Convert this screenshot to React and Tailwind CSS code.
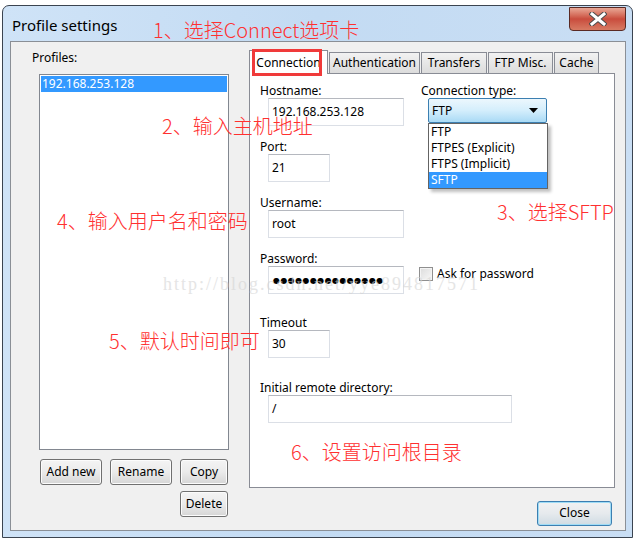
import React from "react"

function WinButton({ children, className = "" }) {
  return (
    <button
      className={`flex items-center justify-center h-[26px] rounded-[3px] border border-[#707070] bg-gradient-to-b from-[#f4f4f4] via-[#ebebeb] to-[#d6d6d6] text-[12px] text-black shadow-[inset_0_0_0_1px_#fcfcfc] ${className}`}
    >
      {children}
    </button>
  )
}

function Field({ label, value, width, className = "" }) {
  return (
    <div className={className}>
      <div className="h-[15px] leading-[15px] text-[12px]">{label}</div>
      <div
        className="ml-[8px] h-[28px] border border-[#dbdfe6] border-t-[#b5b8bf] bg-white pl-[3px] flex items-center text-[12px]"
        style={{ width }}
      >
        {value}
      </div>
    </div>
  )
}

export default function App() {
  const tabs = [
    ["Authentication", "w-[91px]"],
    ["Transfers", "w-[66px]"],
    ["FTP Misc.", "w-[65px]"],
    ["Cache", "w-[45px]"],
  ]

  return (
    <div className="relative w-[640px] h-[544px] bg-white pl-[2px] pt-[5px] overflow-hidden font-['Noto_Sans','Noto_Sans_CJK_SC',sans-serif] text-black">
      {/* window frame */}
      <div className="w-[631px] h-[533px] rounded-t-[7px] border border-[#3b4450] bg-gradient-to-r from-[#cfe3f7] via-[#c3dbf3] to-[#c9def4] flex flex-col">
        <div className="h-[35px] flex items-start justify-between pl-[9px] pr-[6px]">
          <div className="pt-[9px] text-[15px] leading-[20px]">Profile settings</div>
          <div className="mt-[1px] w-[57px] h-[24px] rounded-b-[4px] border border-[#5a2a24] bg-gradient-to-b from-[#e8a796] via-[#c94c3d] to-[#d77a63] flex items-center justify-center">
            <svg width="18" height="14" viewBox="0 0 18 14">
              <path d="M3 2 L15 12 M15 2 L3 12" stroke="#4b4b4b" strokeWidth="5" strokeLinecap="square" />
              <path d="M3 2 L15 12 M15 2 L3 12" stroke="#ffffff" strokeWidth="3" strokeLinecap="square" />
            </svg>
          </div>
        </div>

        {/* client area */}
        <div className="ml-[7px] w-[616px] h-[490px] border border-[#8a8f96] bg-[#f0f0f0] flex">
          {/* profiles column */}
          <div className="pl-[21px] pt-[8px]">
            <div className="h-[16px] leading-[16px] text-[12px]">Profiles:</div>
            <div className="mt-[8px] ml-[7px] w-[190px] h-[376px] border border-[#828790] bg-white p-[1px]">
              <div className="h-[16px] leading-[16px] bg-[#3399ff] text-white text-[12px] pl-[1px]">192.168.253.128</div>
            </div>
            <div className="ml-[8px] mt-[9px] flex gap-[8px]">
              <WinButton className="w-[62px]">Add new</WinButton>
              <WinButton className="w-[62px]">Rename</WinButton>
              <div className="flex flex-col gap-[6px]">
                <WinButton className="w-[48px]">Copy</WinButton>
                <WinButton className="w-[48px]">Delete</WinButton>
              </div>
            </div>
          </div>

          {/* settings column */}
          <div className="ml-[20px] pt-[7px] flex flex-col">
            <div className="h-[24px] flex items-end gap-[1px] relative z-10">
              <div className="w-[79px] h-[24px] -mb-[1px] border border-b-0 border-[#898c95] bg-white text-[12px] flex items-center justify-center">
                Connection
              </div>
              {tabs.map(([t, w]) => (
                <div
                  key={t}
                  className={`${w} h-[21px] border border-b-0 border-[#898c95] bg-gradient-to-b from-[#f2f2f2] to-[#dcdcdc] text-[12px] flex items-center justify-center`}
                >
                  {t}
                </div>
              ))}
            </div>
            <div className="w-[366px] h-[415px] border border-[#898c95] bg-white pl-[10px] pt-[9px]">
              <div className="flex">
                <Field label="Hostname:" value="192.168.253.128" width={136} className="w-[161px]" />
                <div>
                  <div className="h-[15px] leading-[15px] text-[12px]">Connection type:</div>
                  <div className="relative ml-[7px] w-[119px]">
                    <div className="h-[25px] rounded-[2px] border border-[#3c7fb1] bg-gradient-to-b from-[#ecf7fd] via-[#d4eefc] to-[#a9daf5] flex items-center justify-between pl-[3px] pr-[8px] text-[12px]">
                      <span>FTP</span>
                      <svg width="9" height="5" viewBox="0 0 9 5">
                        <path d="M0 0 H9 L4.5 5 Z" fill="#000" />
                      </svg>
                    </div>
                    <div className="absolute left-0 top-full w-[120px] border border-[#646464] bg-white shadow-[3px_3px_3px_rgba(0,0,0,0.25)] text-[12px]">
                      <div className="h-[16px] leading-[16px] pl-[2px]">FTP</div>
                      <div className="h-[16px] leading-[16px] pl-[2px]">FTPES (Explicit)</div>
                      <div className="h-[16px] leading-[16px] pl-[2px]">FTPS (Implicit)</div>
                      <div className="h-[16px] leading-[16px] pl-[2px] bg-[#3399ff] text-white">SFTP</div>
                    </div>
                  </div>
                </div>
              </div>
              <Field label="Port:" value="21" width={62} className="mt-[13px]" />
              <Field label="Username:" value="root" width={136} className="mt-[13px]" />
              <div className="mt-[13px] flex">
                <Field
                  label="Password:"
                  value={<span className="font-['DejaVu_Sans',sans-serif] text-[8px] tracking-[0.4px] pl-[1px] pt-[1px]">●●●●●●●●●●●●●●●</span>}
                  width={136}
                />
                <div className="mt-[15px] ml-[15px] flex items-center h-[16px]">
                  <div className="w-[14px] h-[14px] border border-[#8f8f8f] bg-gradient-to-br from-[#dcdcdc] to-[#f8f8f8] shadow-[inset_0_0_0_1px_#f4f4f4]" />
                  <span className="ml-[4px] text-[12px]">Ask for password</span>
                </div>
              </div>
              <Field label="Timeout" value="30" width={62} className="mt-[21px]" />
              <Field label="Initial remote directory:" value="/" width={244} className="mt-[22px]" />
            </div>
            <div className="mt-[11px] mr-[3px] self-end">
              <button className="w-[75px] h-[25px] rounded-[3px] border border-[#3c7fb1] bg-gradient-to-b from-[#f2f2f2] via-[#e6eaed] to-[#cfdbe3] shadow-[inset_0_0_0_1px_#9fdcf6] text-[12px]">
                Close
              </button>
            </div>
          </div>
        </div>
      </div>

      {/* annotations */}
      <div className="absolute left-[252px] top-[49px] w-[70px] h-[27px] border-[3px] border-[#f03a3a] z-20" />
      <div className="absolute left-[163px] top-[271px] font-['Liberation_Serif',serif] text-[18px] tracking-[2px] text-[#d4d4d4] opacity-60 z-20 pointer-events-none">
        http://blog.csdn.net/yye894817571
      </div>
      <div className="absolute inset-0 z-30 font-['Noto_Sans_CJK_SC',sans-serif] font-light text-[20px] text-[#ff3030] leading-[24px] pointer-events-none">
        <div className="absolute left-[153px] top-[18px]">1、选择Connect选项卡</div>
        <div className="absolute left-[162px] top-[114px]">2、输入主机地址</div>
        <div className="absolute left-[497px] top-[200px]">3、选择SFTP</div>
        <div className="absolute left-[57px] top-[209px]">4、输入用户名和密码</div>
        <div className="absolute left-[109px] top-[329px]">5、默认时间即可</div>
        <div className="absolute left-[291px] top-[440px]">6、设置访问根目录</div>
      </div>
    </div>
  )
}
